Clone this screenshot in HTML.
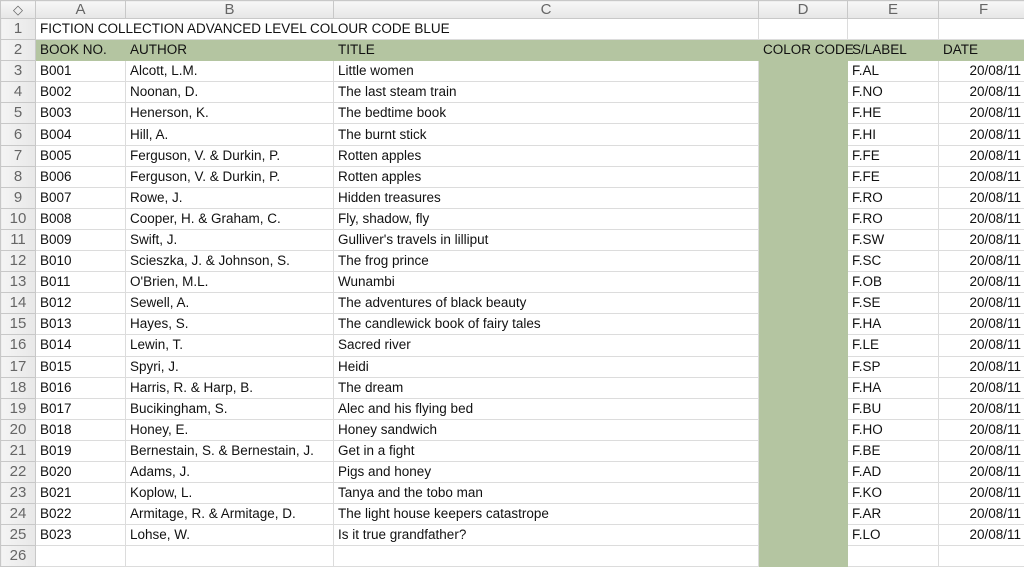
<!DOCTYPE html>
<html><head><meta charset="utf-8"><style>
body{margin:0;width:1024px;height:549px;overflow:hidden;background:#fff;font-family:"Liberation Sans",sans-serif;position:relative;}
table{border-collapse:collapse;table-layout:fixed;position:absolute;left:0;top:0;width:1038px;}
td{height:20.1px;padding:0 0 0 4px;border:1px solid #dcdcdc;font-size:13.5px;color:#111;white-space:nowrap;overflow:visible;line-height:20px;}
tr.h td{height:17px;line-height:17px;background:linear-gradient(#f7f7f7,#e6e6e6);color:#666;text-align:center;font-size:15px;border-color:#c8c8c8;padding:0;}
td.n{background:linear-gradient(90deg,#f4f4f4,#e8e8e8);color:#666;text-align:center;font-size:15px;padding:0;border-color:#c8c8c8;}
.g{background:#b4c5a1;border-color:#b4c5a1;}
.r{text-align:right;padding-right:17px;}
</style></head><body>
<table>
<colgroup><col style="width:35px"><col style="width:90px"><col style="width:208px"><col style="width:425px"><col style="width:89px"><col style="width:91px"><col style="width:100px"></colgroup>
<tr class="h"><td style="font-size:13px">◇</td><td>A</td><td>B</td><td>C</td><td>D</td><td>E</td><td style="text-align:left;padding-left:40px">F</td></tr>
<tr><td class="n">1</td><td colspan="3">FICTION COLLECTION ADVANCED LEVEL COLOUR CODE BLUE</td><td></td><td></td><td></td></tr>
<tr><td class="n">2</td><td class="g">BOOK NO.</td><td class="g">AUTHOR</td><td class="g">TITLE</td><td class="g">COLOR CODE</td><td class="g">S/LABEL</td><td class="g">DATE</td></tr>
<tr><td class="n">3</td><td>B001</td><td>Alcott, L.M.</td><td>Little women</td><td class="g"></td><td>F.AL</td><td class="r">20/08/11</td></tr>
<tr><td class="n">4</td><td>B002</td><td>Noonan, D.</td><td>The last steam train</td><td class="g"></td><td>F.NO</td><td class="r">20/08/11</td></tr>
<tr><td class="n">5</td><td>B003</td><td>Henerson, K.</td><td>The bedtime book</td><td class="g"></td><td>F.HE</td><td class="r">20/08/11</td></tr>
<tr><td class="n">6</td><td>B004</td><td>Hill, A.</td><td>The burnt stick</td><td class="g"></td><td>F.HI</td><td class="r">20/08/11</td></tr>
<tr><td class="n">7</td><td>B005</td><td>Ferguson, V. &amp; Durkin, P.</td><td>Rotten apples</td><td class="g"></td><td>F.FE</td><td class="r">20/08/11</td></tr>
<tr><td class="n">8</td><td>B006</td><td>Ferguson, V. &amp; Durkin, P.</td><td>Rotten apples</td><td class="g"></td><td>F.FE</td><td class="r">20/08/11</td></tr>
<tr><td class="n">9</td><td>B007</td><td>Rowe, J.</td><td>Hidden treasures</td><td class="g"></td><td>F.RO</td><td class="r">20/08/11</td></tr>
<tr><td class="n">10</td><td>B008</td><td>Cooper, H. &amp; Graham, C.</td><td>Fly, shadow, fly</td><td class="g"></td><td>F.RO</td><td class="r">20/08/11</td></tr>
<tr><td class="n">11</td><td>B009</td><td>Swift, J.</td><td>Gulliver's travels in lilliput</td><td class="g"></td><td>F.SW</td><td class="r">20/08/11</td></tr>
<tr><td class="n">12</td><td>B010</td><td>Scieszka, J. &amp; Johnson, S.</td><td>The frog prince</td><td class="g"></td><td>F.SC</td><td class="r">20/08/11</td></tr>
<tr><td class="n">13</td><td>B011</td><td>O'Brien, M.L.</td><td>Wunambi</td><td class="g"></td><td>F.OB</td><td class="r">20/08/11</td></tr>
<tr><td class="n">14</td><td>B012</td><td>Sewell, A.</td><td>The adventures of black beauty</td><td class="g"></td><td>F.SE</td><td class="r">20/08/11</td></tr>
<tr><td class="n">15</td><td>B013</td><td>Hayes, S.</td><td>The candlewick book of fairy tales</td><td class="g"></td><td>F.HA</td><td class="r">20/08/11</td></tr>
<tr><td class="n">16</td><td>B014</td><td>Lewin, T.</td><td>Sacred river</td><td class="g"></td><td>F.LE</td><td class="r">20/08/11</td></tr>
<tr><td class="n">17</td><td>B015</td><td>Spyri, J.</td><td>Heidi</td><td class="g"></td><td>F.SP</td><td class="r">20/08/11</td></tr>
<tr><td class="n">18</td><td>B016</td><td>Harris, R. &amp; Harp, B.</td><td>The dream</td><td class="g"></td><td>F.HA</td><td class="r">20/08/11</td></tr>
<tr><td class="n">19</td><td>B017</td><td>Bucikingham, S.</td><td>Alec and his flying bed</td><td class="g"></td><td>F.BU</td><td class="r">20/08/11</td></tr>
<tr><td class="n">20</td><td>B018</td><td>Honey, E.</td><td>Honey sandwich</td><td class="g"></td><td>F.HO</td><td class="r">20/08/11</td></tr>
<tr><td class="n">21</td><td>B019</td><td>Bernestain, S. &amp; Bernestain, J.</td><td>Get in a fight</td><td class="g"></td><td>F.BE</td><td class="r">20/08/11</td></tr>
<tr><td class="n">22</td><td>B020</td><td>Adams, J.</td><td>Pigs and honey</td><td class="g"></td><td>F.AD</td><td class="r">20/08/11</td></tr>
<tr><td class="n">23</td><td>B021</td><td>Koplow, L.</td><td>Tanya and the tobo man</td><td class="g"></td><td>F.KO</td><td class="r">20/08/11</td></tr>
<tr><td class="n">24</td><td>B022</td><td>Armitage, R. &amp; Armitage, D.</td><td>The light house keepers catastrope</td><td class="g"></td><td>F.AR</td><td class="r">20/08/11</td></tr>
<tr><td class="n">25</td><td>B023</td><td>Lohse, W.</td><td>Is it true grandfather?</td><td class="g"></td><td>F.LO</td><td class="r">20/08/11</td></tr>
<tr><td class="n">26</td><td></td><td></td><td></td><td class="g"></td><td></td><td></td></tr>
</table>
</body></html>
